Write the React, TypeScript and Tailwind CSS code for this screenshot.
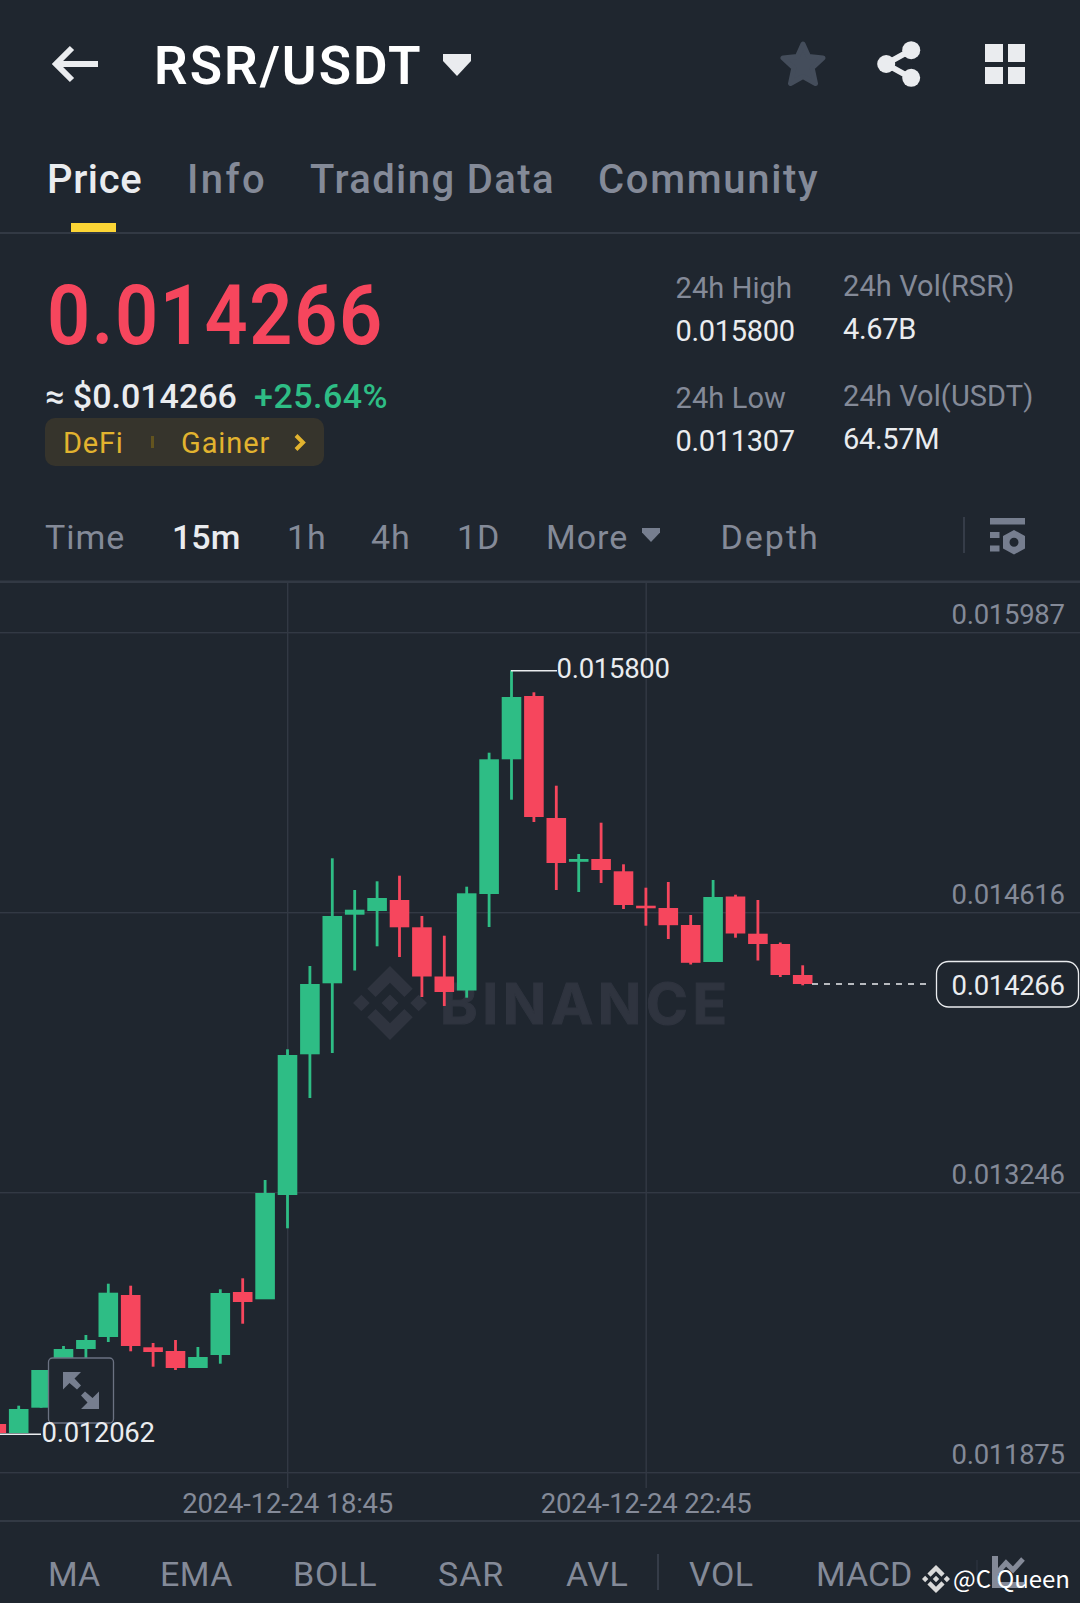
import { useState } from "react";

type Candle = {
  up: boolean;
  top: number;
  bottom: number;
  high: number;
  low: number;
};

const c = (up: number, top: number, bottom: number, high: number, low: number): Candle => ({
  up: up === 1,
  top,
  bottom,
  high,
  low,
});

// values are chart y coordinates
const candles: Candle[] = [
  c(0, 1424, 1433, 1424, 1433),
  c(1, 1409, 1433, 1405.7, 1433),
  c(1, 1370, 1407.7, 1370, 1407.7),
  c(1, 1349, 1366, 1346, 1366),
  c(1, 1340, 1349, 1335, 1362),
  c(1, 1292.7, 1337, 1283.7, 1342),
  c(0, 1295, 1346, 1285.7, 1351.3),
  c(0, 1347.3, 1352, 1343, 1366.7),
  c(0, 1351, 1368, 1340, 1370),
  c(1, 1357, 1368, 1347, 1368),
  c(1, 1293, 1355, 1289.3, 1363.7),
  c(0, 1292, 1302, 1278.3, 1323.7),
  c(1, 1193, 1299.3, 1180, 1299),
  c(1, 1055, 1195, 1049.3, 1228.3),
  c(1, 984, 1054.3, 966, 1098),
  c(1, 916, 983.3, 858.3, 1053),
  c(1, 909.7, 914.7, 890, 970.5),
  c(1, 898, 911, 881.3, 946.3),
  c(0, 900, 927.3, 875.7, 957),
  c(0, 927.3, 976.5, 916, 997),
  c(0, 976.5, 992, 935.7, 1006),
  c(1, 893.3, 990.5, 886.7, 997.7),
  c(1, 759.3, 894, 752.7, 927),
  c(1, 697, 759.3, 670.3, 799.7),
  c(0, 696, 817, 692.3, 822),
  c(0, 818, 863, 785.7, 890),
  c(1, 859, 861.8, 854, 892),
  c(0, 859, 870, 822.7, 883),
  c(0, 871.3, 905, 864.3, 909),
  c(0, 905.7, 908.3, 887.7, 925.7),
  c(0, 908, 925.2, 882, 939),
  c(0, 925, 962.8, 915, 964.5),
  c(1, 897, 962, 880, 962),
  c(0, 896.5, 933.5, 894.7, 937.7),
  c(0, 933.7, 944, 900, 960.5),
  c(0, 944, 975, 942.5, 977),
  c(0, 975, 984, 965.3, 985.3),
];

const tabs = [
  { name: "Price", style: "w-[140px] tracking-[0.6px]" },
  { name: "Info", style: "w-[123px] tracking-[2.4px]" },
  { name: "Trading Data", style: "w-[288px] tracking-[1.4px]" },
  { name: "Community", style: "w-[240px] tracking-[1.7px]" },
];

const intervals = [
  { name: "Time", style: "w-[127px] tracking-[1px]" },
  { name: "15m", style: "w-[115px]" },
  { name: "1h", style: "w-[84px] tracking-[1px]" },
  { name: "4h", style: "w-[86px] tracking-[1px]" },
  { name: "1D", style: "w-[89px] tracking-[1px]" },
];

const indicators = [
  { name: "MA", style: "w-[112px]" },
  { name: "EMA", style: "w-[133px] tracking-[0.5px]" },
  { name: "BOLL", style: "w-[145px] tracking-[0.8px]" },
  { name: "SAR", style: "w-[128px] tracking-[1px]" },
  { name: "AVL", style: "w-[91px] tracking-[0.5px]" },
];

const priceAxis = [
  { label: "0.015987", y: 632.5 },
  { label: "0.014616", y: 912.5 },
  { label: "0.013246", y: 1192.5 },
  { label: "0.011875", y: 1472.5 },
];

const timeAxis = [
  { label: "2024-12-24 18:45", x: 287.5 },
  { label: "2024-12-24 22:45", x: 646 },
];

function BinanceMark({ className }: { className: string }) {
  return (
    <svg viewBox="0 0 126.6 126.6" className={className} fill="currentColor">
      <path d="M38.7 53.2 63.3 28.6l24.6 24.6 14.3-14.3L63.3 0 24.4 38.9zM0 63.3 14.3 49l14.3 14.3-14.3 14.3zM38.7 73.4 63.3 98l24.6-24.6 14.3 14.3-38.9 38.9-38.9-38.9zM98 63.3 112.3 49l14.3 14.3-14.3 14.3zM77.8 63.3 63.3 48.8 48.8 63.3l14.5 14.5z" />
    </svg>
  );
}

function Stat({ label, value }: { label: string; value: string }) {
  return (
    <div className="text-[29px] leading-[43px] whitespace-nowrap">
      <p className="tracking-[0.1px] text-[#848a98]">{label}</p>
      <p className="tracking-[-0.3px] text-[#eaecef]">{value}</p>
    </div>
  );
}

function Header() {
  return (
    <header className="flex h-32 items-center pl-[52px]">
      <svg width="46" height="38" viewBox="0 0 46 38" fill="none" stroke="#eaecef" strokeWidth="6">
        <path d="M46 19H5M20 3 4 19l16 16" />
      </svg>
      <h1 className="ml-[56px] w-[289px] pt-[5px] text-[53px] leading-none font-semibold tracking-[2px] whitespace-nowrap text-white">
        RSR/USDT
      </h1>
      <svg width="28" height="22" viewBox="0 0 28 22" fill="#eaecef" className="mt-0.5">
        <path d="M0 0h28v7L14 22 0 7z" />
      </svg>
      <svg width="46" height="48" viewBox="0 0 46 48" className="ml-[309px]">
        <path
          d="M23 4l5.600 12.500 14.400 1.500-10.800 10L35.500 43.500 23 36.500 10.500 43.500l3.300-15.500L3 18l14.400-1.500z"
          fill="#444d5b"
          stroke="#444d5b"
          strokeWidth="5"
          strokeLinejoin="round"
        />
      </svg>
      <svg width="44" height="48" viewBox="0 0 44 48" className="ml-[51px]" fill="#eaecef">
        <path d="M34.200 10 9 24l25.200 14" fill="none" stroke="#eaecef" strokeWidth="6" />
        <circle cx="9.200" cy="24" r="9" />
        <circle cx="34.200" cy="10.200" r="9" />
        <circle cx="34.200" cy="37.800" r="9" />
      </svg>
      <div className="ml-[64px] grid grid-cols-2 gap-[5px]">
        <i className="size-[17.5px] bg-[#eaecef]" />
        <i className="size-[17.5px] bg-[#eaecef]" />
        <i className="size-[17.5px] bg-[#eaecef]" />
        <i className="size-[17.5px] bg-[#eaecef]" />
      </div>
    </header>
  );
}

function Chart() {
  return (
    <svg
      width="1080"
      height="940"
      viewBox="0 580 1080 940"
      className="block font-[Roboto,sans-serif] text-[27.5px]"
      fill="#848a98"
    >
      <g fill="#323944">
        <rect x="0" y="580.500" width="1080" height="2.500" />
        {priceAxis.map((p) => (
          <rect key={p.label} x="0" y={p.y - 0.5} width="1080" height="1.400" />
        ))}
        {timeAxis.map((t) => (
          <rect key={t.label} x={t.x - 0.5} y="583" width="1.400" height="905" />
        ))}
      </g>

      <g className="text-[#2f343f]">
        <svg x="353" y="966" width="74" height="74">
          <BinanceMark className="size-full" />
        </svg>
        <text
          x="440"
          y="1023.500"
          fill="#2f343f"
          stroke="#2f343f"
          strokeWidth="1"
          textLength="287"
          className="font-[Inter,sans-serif] text-[57px] font-bold"
        >
          BINANCE
        </text>
      </g>

      {candles.map((k, i) => {
        const x = 18.7 + 22.4 * (i - 1);
        return (
          <g key={i} fill={k.up ? "#2ebd85" : "#f6465d"}>
            <rect x={x - 1.4} y={k.high} width="2.800" height={k.low - k.high} />
            <rect x={x - 9.8} y={k.top} width="19.600" height={k.bottom - k.top} />
          </g>
        );
      })}

      {priceAxis.map((p) => (
        <text key={p.label} x="951.500" y={p.y - 9} textLength="113.500">
          {p.label}
        </text>
      ))}
      {timeAxis.map((t) => (
        <text key={t.label} x={t.x + 0.3} y="1513" textAnchor="middle" textLength="211">
          {t.label}
        </text>
      ))}

      <rect x="48.500" y="1358" width="65" height="65" rx="4" fill="#1f262f" stroke="#6b7282" strokeWidth="1.300" />
      <g fill="#767e8f">
        <path d="M63 1372h18l-6.500 6.500 6.500 7-4 4-7.500-6.500-6.500 6.500zM99 1409H81l6.500-6.500-6.500-7 4-4 7.500 6.500 6.500-6.500z" />
      </g>

      <g fill="#eaecef">
        <rect x="511" y="670" width="46" height="1.500" />
        <text x="556.500" y="677.500" textLength="113.500">0.015800</text>
        <rect x="0" y="1433.500" width="41" height="1.500" />
        <text x="41.500" y="1442" textLength="113.500">0.012062</text>
      </g>

      <path d="M812 984h116" stroke="#eaecef" strokeWidth="1.600" strokeDasharray="6 6" />
      <rect x="936.500" y="961.500" width="142" height="45.500" rx="12" fill="#1f262f" stroke="#eaecef" strokeWidth="1.300" />
      <text x="951.500" y="995" fill="#eaecef" textLength="113.500">0.014266</text>
    </svg>
  );
}

export default function App() {
  const [tab, setTab] = useState("Price");
  const [interval, setInterval] = useState("15m");

  return (
    <main className="relative flex h-[1603px] w-[1080px] flex-col overflow-hidden bg-[#1f262f] font-[Roboto,sans-serif]">
      <Header />

      <nav className="flex h-[106px] border-b-2 border-[#323944] pl-[47px]">
        {tabs.map((t) => (
          <button
            key={t.name}
            onClick={() => setTab(t.name)}
            className={`${t.style} ${t.name === tab ? "text-[#eaecef]" : "text-[#848a98]"} flex flex-col items-start pt-8 text-[40px] leading-10 font-medium whitespace-nowrap`}
          >
            {t.name}
            {t.name === tab && <span className="mt-[23px] ml-6 h-[9px] w-[45px] bg-[#fcd535]" />}
          </button>
        ))}
      </nav>

      <section className="flex h-[258px]">
        <div className="w-[675.5px] pt-10 pl-[45px]">
          <p className="ml-0.5 origin-left scale-x-90 text-[84px] leading-none font-semibold tracking-[1.8px] text-[#f6465d]">
            0.014266
          </p>
          <div className="mt-[21px] flex text-[34px] leading-none font-medium whitespace-nowrap">
            <p className="w-[209px] text-[#eaecef]">≈ $0.014266</p>
            <p className="tracking-[0.5px] text-[#2ebd85]">+25.64%</p>
          </div>
          <div className="mt-[5px] flex h-12 w-[279px] items-center rounded-[10px] bg-[#36342c] pl-[18px] text-[29px] leading-none text-[#e2b32f]">
            <span className="w-[88px] pt-[3px] tracking-[0.8px]">DeFi</span>
            <i className="h-3 w-[3px] bg-[#63541f]" />
            <span className="ml-[27px] w-[113px] pt-[3px] tracking-[0.9px]">Gainer</span>
            <svg width="12" height="17" viewBox="0 0 12 17" fill="none" stroke="currentColor" strokeWidth="4">
              <path d="M2 1.500 9 8.500 2 15.500" />
            </svg>
          </div>
        </div>
        <div className="flex w-[167.5px] flex-col gap-6 pt-[33px]">
          <Stat label="24h High" value="0.015800" />
          <Stat label="24h Low" value="0.011307" />
        </div>
        <div className="flex flex-col gap-6 pt-[31px]">
          <Stat label="24h Vol(RSR)" value="4.67B" />
          <Stat label="24h Vol(USDT)" value="64.57M" />
        </div>
      </section>

      <div className="flex h-[88px] items-center pt-[2px] pl-[45px] text-[34px] leading-none text-[#848a98]">
        {intervals.map((t) => (
          <button
            key={t.name}
            onClick={() => setInterval(t.name)}
            className={`${t.style} ${t.name === interval ? "font-medium text-[#eaecef]" : ""} text-left`}
          >
            {t.name}
          </button>
        ))}
        <button className="flex w-[174.5px] items-center">
          <span className="w-[96px] text-left tracking-[1px]">More</span>
          <svg width="18" height="14" viewBox="0 0 18 14" fill="#767e8f" className="-mt-[5px]">
            <path d="M0 0h18v4.500L9 14 0 4.500z" />
          </svg>
        </button>
        <span className="w-[242.5px] tracking-[2px]">Depth</span>
        <i className="-mt-1 h-9 w-[2px] bg-[#353c48]" />
        <svg width="36" height="38" viewBox="0 0 36 38" fill="#767e8f" className="-mt-[3px] ml-[25px]">
          <path d="M0 1h35v6.500H0zM0 15h9.500v6H0zM0 28.500h9.500v6H0z" />
          <path
            fillRule="evenodd"
            d="M24 13l11 6v12.500l-11 6-11-6V19zM24 20.700a4.500 4.500 0 1 0 0 9 4.500 4.500 0 0 0 0-9z"
          />
        </svg>
      </div>

      <Chart />

      <footer className="flex h-[83px] items-center border-t-2 border-[#323944] pt-[23px] pl-[48px] text-[34px] leading-none text-[#848a98]">
        {indicators.map((t) => (
          <button key={t.name} className={`${t.style} text-left`}>
            {t.name}
          </button>
        ))}
        <i className="-mt-1 h-9 w-[2px] bg-[#353c48]" />
        <button className="ml-[30px] w-[127px] text-left tracking-[0.5px]">VOL</button>
        <button className="w-[160px] text-left">MACD</button>
        <i className="-mt-1 h-6 w-[2px] bg-[#272e39]" />
        <svg width="34" height="33" viewBox="0 0 34 33" fill="none" className="-mt-1 ml-[14px]" stroke="#848a98">
          <path d="M3 0v29h29" strokeWidth="6" />
          <path d="M5 17 14 7l7 7L31 3" strokeWidth="5" />
        </svg>
      </footer>

      <div className="absolute right-[8px] bottom-[6px] flex w-[150px] items-center">
        <BinanceMark className="size-7 shrink-0 text-[#d9d9d9]" />
        <span className="-mt-0.5 ml-[3px] font-['Noto_Sans_CJK_SC',sans-serif] text-[24px] leading-[38px] font-normal whitespace-nowrap text-white">
          @C Queen
        </span>
      </div>
    </main>
  );
}
